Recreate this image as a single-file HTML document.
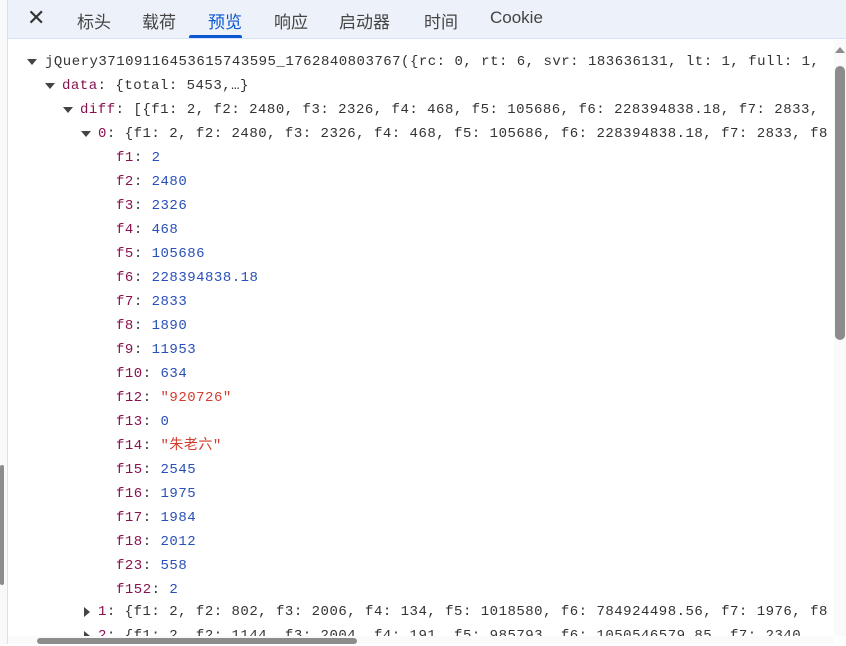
<!DOCTYPE html>
<html><head><meta charset="utf-8"><style>
body{margin:0;width:846px;height:644px;overflow:hidden;background:#fff;position:relative;font-family:"Liberation Sans","Noto Sans CJK SC",sans-serif}
#left{position:absolute;left:0;top:0;width:7px;height:644px;background:#f8f9fa;border-right:1px solid #d3e3fd}
#lthumb{position:absolute;left:0;top:465px;width:4px;height:120px;background:#8c8c8c;border-radius:2px}
#tabs{position:absolute;left:8px;top:0;right:0;height:38px;background:#edf2fa;border-bottom:1px solid #d3e3fd}
.tab{position:absolute;top:8px;font-size:17px;color:#444}
#ul{position:absolute;left:189px;top:35px;width:53px;height:3px;background:#0b57d0;border-radius:2px 2px 0 0}
.l{position:absolute;font-family:"Liberation Mono","Noto Sans CJK SC",monospace;font-size:14px;letter-spacing:0.5px;white-space:pre;color:#333;line-height:20px}
.k{color:#881250}.n{color:#1a1aa6;color:#2950b8}.s{color:#c5221f;color:#d33b2f}
.a{position:absolute;width:0;height:0}
.ad{border-left:5px solid transparent;border-right:5px solid transparent;border-top:6px solid #444}
.ar{border-top:5px solid transparent;border-bottom:5px solid transparent;border-left:6px solid #444}
#vs{position:absolute;left:834px;top:40px;width:12px;height:596px;background:#fafafa}
#vt{position:absolute;left:835px;top:66px;width:10px;height:274px;background:#8c8c8c;border-radius:5px}
#hs{position:absolute;left:8px;top:636px;width:826px;height:8px;background:#fafafa}
#ht{position:absolute;left:37px;top:638px;width:320px;height:6px;background:#8c8c8c;border-radius:3px}
</style></head><body>
<div id="left"><div id="lthumb"></div></div>
<div id="tabs">
<div class="tab" style="left:19px;top:5px;font-size:22px;color:#333">✕</div>
<div class="tab" style="left:69px">标头</div>
<div class="tab" style="left:134px">载荷</div>
<div class="tab" style="left:200px;color:#0b57d0">预览</div>
<div class="tab" style="left:266px">响应</div>
<div class="tab" style="left:331px">启动器</div>
<div class="tab" style="left:416px">时间</div>
<div class="tab" style="left:482px">Cookie</div>
</div>
<div id="ul"></div>

<div class="a ad" style="left:27px;top:59px"></div>
<div class="l" style="left:45px;top:52px">jQuery37109116453615743595_1762840803767({rc: 0, rt: 6, svr: 183636131, lt: 1, full: 1,</div>
<div class="a ad" style="left:45px;top:83px"></div>
<div class="l" style="left:62px;top:76px"><span class="k">data</span>: {total: 5453,…}</div>
<div class="a ad" style="left:63px;top:107px"></div>
<div class="l" style="left:80px;top:100px"><span class="k">diff</span>: [{f1: 2, f2: 2480, f3: 2326, f4: 468, f5: 105686, f6: 228394838.18, f7: 2833,</div>
<div class="a ad" style="left:81px;top:131px"></div>
<div class="l" style="left:98px;top:124px"><span class="k">0</span>: {f1: 2, f2: 2480, f3: 2326, f4: 468, f5: 105686, f6: 228394838.18, f7: 2833, f8</div>

<div class="l" style="left:116px;top:148px"><span class="k">f1</span>: <span class="n">2</span></div>
<div class="l" style="left:116px;top:172px"><span class="k">f2</span>: <span class="n">2480</span></div>
<div class="l" style="left:116px;top:196px"><span class="k">f3</span>: <span class="n">2326</span></div>
<div class="l" style="left:116px;top:220px"><span class="k">f4</span>: <span class="n">468</span></div>
<div class="l" style="left:116px;top:244px"><span class="k">f5</span>: <span class="n">105686</span></div>
<div class="l" style="left:116px;top:268px"><span class="k">f6</span>: <span class="n">228394838.18</span></div>
<div class="l" style="left:116px;top:292px"><span class="k">f7</span>: <span class="n">2833</span></div>
<div class="l" style="left:116px;top:316px"><span class="k">f8</span>: <span class="n">1890</span></div>
<div class="l" style="left:116px;top:340px"><span class="k">f9</span>: <span class="n">11953</span></div>
<div class="l" style="left:116px;top:364px"><span class="k">f10</span>: <span class="n">634</span></div>
<div class="l" style="left:116px;top:388px"><span class="k">f12</span>: <span class="s">"920726"</span></div>
<div class="l" style="left:116px;top:412px"><span class="k">f13</span>: <span class="n">0</span></div>
<div class="l" style="left:116px;top:436px"><span class="k">f14</span>: <span class="s">"朱老六"</span></div>
<div class="l" style="left:116px;top:460px"><span class="k">f15</span>: <span class="n">2545</span></div>
<div class="l" style="left:116px;top:484px"><span class="k">f16</span>: <span class="n">1975</span></div>
<div class="l" style="left:116px;top:508px"><span class="k">f17</span>: <span class="n">1984</span></div>
<div class="l" style="left:116px;top:532px"><span class="k">f18</span>: <span class="n">2012</span></div>
<div class="l" style="left:116px;top:556px"><span class="k">f23</span>: <span class="n">558</span></div>
<div class="l" style="left:116px;top:580px"><span class="k">f152</span>: <span class="n">2</span></div>

<div class="a ar" style="left:84px;top:607px"></div>
<div class="l" style="left:98px;top:602px"><span class="k">1</span>: {f1: 2, f2: 802, f3: 2006, f4: 134, f5: 1018580, f6: 784924498.56, f7: 1976, f8</div>
<div class="a ar" style="left:84px;top:631px"></div>
<div class="l" style="left:98px;top:626px"><span class="k">2</span>: {f1: 2, f2: 1144, f3: 2004, f4: 191, f5: 985793, f6: 1050546579.85, f7: 2340,</div>

<div id="vs"></div><div id="vt"></div>
<div class="a" style="left:835px;top:47px;border-left:5px solid transparent;border-right:5px solid transparent;border-bottom:6px solid #8c8c8c"></div>
<div id="hs"></div><div id="ht"></div>
</body></html>
